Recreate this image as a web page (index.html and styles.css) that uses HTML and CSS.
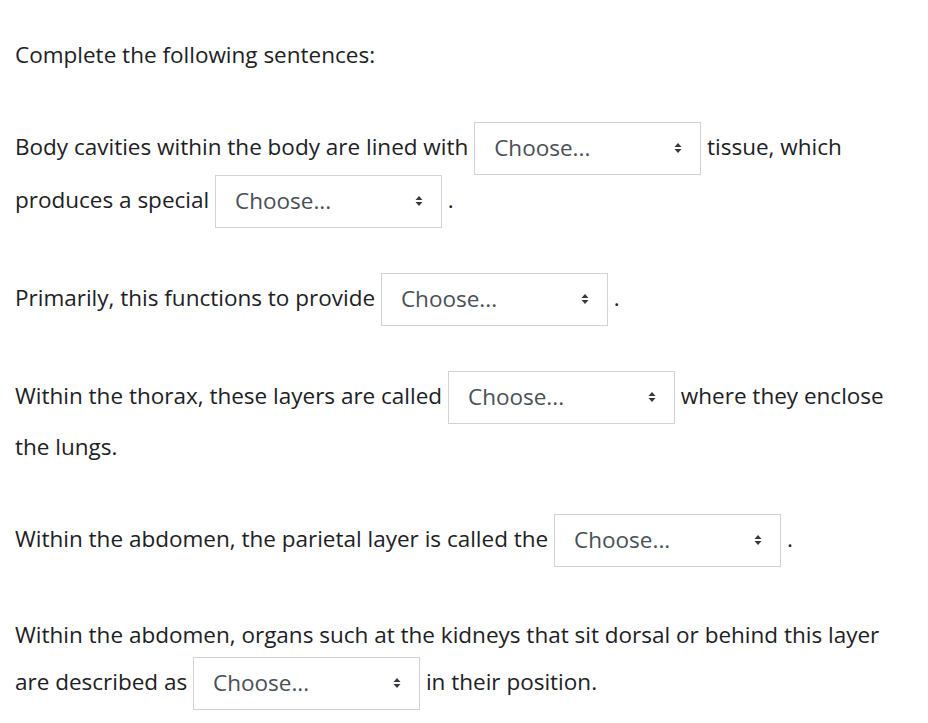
FILE: index.html
```html
<!DOCTYPE html>
<html lang="en">
<head>
    <meta charset="UTF-8">
    <meta name="viewport" content="width=device-width, initial-scale=1.0">
    <title>Complete the following sentences</title>
    <link rel="stylesheet" href="styles.css">
</head>
<body>
    <div class="question">
        <p class="prompt">Complete the following sentences:</p>

        <p>Body cavities within the body are lined with
            <span class="choice"><select><option>Choose...</option></select><svg viewBox="0 0 8 12"><path d="M4 1 7.5 5H.5zM4 11 .5 7h7z"/></svg></span>
            tissue, which produces a special
            <span class="choice"><select><option>Choose...</option></select><svg viewBox="0 0 8 12"><path d="M4 1 7.5 5H.5zM4 11 .5 7h7z"/></svg></span> .</p>

        <p>Primarily, this functions to provide
            <span class="choice"><select><option>Choose...</option></select><svg viewBox="0 0 8 12"><path d="M4 1 7.5 5H.5zM4 11 .5 7h7z"/></svg></span> .</p>

        <p>Within the thorax, these layers are called
            <span class="choice"><select><option>Choose...</option></select><svg viewBox="0 0 8 12"><path d="M4 1 7.5 5H.5zM4 11 .5 7h7z"/></svg></span>
            where they enclose the lungs.</p>

        <p>Within the abdomen, the parietal layer is called the
            <span class="choice"><select><option>Choose...</option></select><svg viewBox="0 0 8 12"><path d="M4 1 7.5 5H.5zM4 11 .5 7h7z"/></svg></span> .</p>

        <p>Within the abdomen, organs such at the kidneys that sit dorsal or behind this layer are described as
            <span class="choice"><select><option>Choose...</option></select><svg viewBox="0 0 8 12"><path d="M4 1 7.5 5H.5zM4 11 .5 7h7z"/></svg></span>
            in their position.</p>
    </div>
</body>
</html>
```

FILE: styles.css
```css
body {
    margin: 0;
    font-family: "Open Sans", sans-serif;
    font-size: 22.5px;
    line-height: 45px;
    color: #1d2125;
    background: #fff;
}
.question {
    padding: 32px 15px 0 15px;
    width: 898px;
}
.question p {
    margin: 0 0 45px 0;
}
.choice {
    position: relative;
    display: inline-block;
    vertical-align: middle;
    height: 53px;
}
.choice select {
    appearance: none;
    -webkit-appearance: none;
    width: 227px;
    height: 53px;
    margin: 0;
    padding: 0 40px 3px 19px;
    border: 1px solid #ced4da;
    border-radius: 0;
    background: #fff;
    font-family: "Open Sans", sans-serif;
    font-size: 22.5px;
    color: #495057;
}
.choice svg {
    position: absolute;
    right: 19px;
    top: 20px;
    width: 8px;
    height: 12px;
    fill: #343a40;
    pointer-events: none;
}
```
